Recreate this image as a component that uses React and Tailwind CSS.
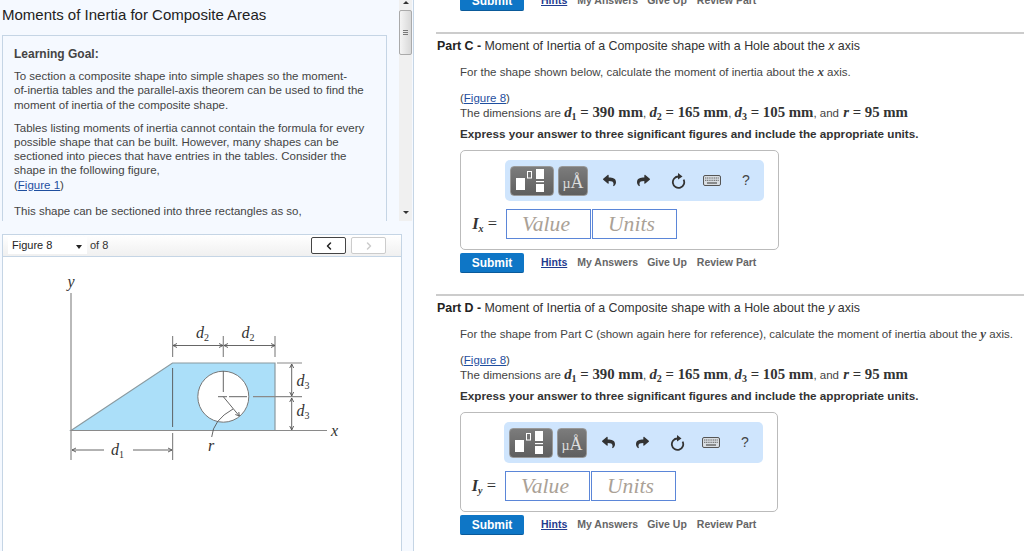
import React from 'react';
import { ChevronLeft, ChevronRight } from 'lucide-react';
import { FaReply, FaShare } from 'react-icons/fa';

const Var = ({ name, sub }) => (
  <span className="whitespace-nowrap">
    <i>{name}</i>
    {sub && <span className="text-[10px] relative top-[3px]">{sub}</span>}
  </span>
);

const Dimensions = () => (
  <p className="h-[14px] leading-[14px] whitespace-nowrap">
    The dimensions are{' '}
    <span className="font-['Liberation_Serif',serif] font-bold text-[14.8px] text-[#333]">
      <Var name="d" sub="1" /> = 390 mm
    </span>
    ,{' '}
    <span className="font-['Liberation_Serif',serif] font-bold text-[14.8px] text-[#333]">
      <Var name="d" sub="2" /> = 165 mm
    </span>
    ,{' '}
    <span className="font-['Liberation_Serif',serif] font-bold text-[14.8px] text-[#333]">
      <Var name="d" sub="3" /> = 105 mm
    </span>
    , and{' '}
    <span className="ml-[1px] font-['Liberation_Serif',serif] font-bold text-[14.8px] text-[#333]">
      <i>r</i> = 95 mm
    </span>
  </p>
);

const KeyboardIcon = () => (
  <svg width="18" height="11" viewBox="0 0 18 11">
    <rect x="0.5" y="0.5" width="17" height="10" rx="1.5" fill="#d8dde2" stroke="#555" />
    <path d="M2 3h14M2 5.3h14" stroke="#666" strokeDasharray="1.2 .6" />
    <path d="M4 8h10" stroke="#666" strokeWidth="1.4" />
  </svg>
);

const ResetIcon = () => (
  <svg width="15" height="16" viewBox="0 0 15 16">
    <path d="M7.5 3.5A5.7 5.7 0 1 0 12.6 6.6" fill="none" stroke="#333" strokeWidth="1.8" />
    <path d="M7 0 11.5 3.5 7 6.5Z" fill="#333" />
  </svg>
);

const TemplateIcon = () => (
  <svg width="42" height="28" viewBox="0 0 42 28">
    <rect x="5" y="11" width="9" height="12" fill="#fff" />
    <rect x="16.5" y="4.5" width="4" height="6.5" fill="none" stroke="#fff" />
    <rect x="25" y="2" width="8" height="10" fill="#fff" />
    <rect x="25" y="14" width="8" height="1.2" fill="#fff" />
    <rect x="25" y="17" width="8" height="8" fill="#fff" />
  </svg>
);

const AnswerBox = ({ sub, shift }) => (
  <div className={`h-[100px] border border-[#bbb] rounded-[5px] bg-white pt-[9px] ${shift ? 'w-[318px]' : 'w-[319px]'}`}>
    <div className={`h-[41px] w-[259px] bg-[#cfe5fd] rounded-[5px] flex items-center pl-[5px] ${shift ? 'ml-[43px]' : 'ml-[44px]'}`}>
      <div className="w-[44px] h-[30px] rounded-[4px] bg-gradient-to-b from-[#7c7c7c] to-[#5f5f5f] border border-[#999]">
        <TemplateIcon />
      </div>
      <div className="ml-[4px] w-[30px] h-[30px] rounded-[4px] bg-gradient-to-b from-[#7c7c7c] to-[#5f5f5f] border border-[#999] text-[#ddd] font-['Liberation_Serif',serif] text-[14px] leading-[31px] text-center">
        µ<span className="text-[18px]">Å</span>
      </div>
      <FaReply className="ml-[15px] text-[#333]" size={13} />
      <FaShare className="ml-[21px] text-[#333]" size={13} />
      <span className="ml-[21px] flex"><ResetIcon /></span>
      <span className="ml-[17px] flex"><KeyboardIcon /></span>
      <span className="ml-[21px] text-[14px] text-[#444] font-['Liberation_Sans',sans-serif]">?</span>
    </div>
    <div className="flex items-center mt-[8px]">
      <div className={`text-right pr-[9px] font-['Liberation_Serif',serif] text-[16.5px] text-[#333] whitespace-nowrap ${shift ? 'w-[44px]' : 'w-[45px]'}`}>
        <b><i>I</i><i className="text-[10px] relative top-[3px]">{sub}</i></b> =
      </div>
      {[
        ['Value', 'w-[85px]'],
        ['Units', 'w-[85px] ml-[1px]'],
      ].map(([text, width]) => (
        <div
          key={text}
          className={`${width} h-[30px] border border-[#5b86d8] bg-white pl-[15px] font-['Liberation_Serif',serif] italic text-[21.6px] leading-[29px] text-[#aaa196]`}
        >
          {text}
        </div>
      ))}
    </div>
  </div>
);

const ActionRow = () => (
  <div className="flex items-center h-[20px] text-[10.5px] font-bold text-[#666] whitespace-nowrap">
    <button className="w-[64px] h-[20px] rounded-[2px] bg-[#0e76c6] border-b border-[#0a5a9a] text-white text-[12px]">Submit</button>
    <a className="ml-[17px] text-[#1f3c8f] underline">Hints</a>
    <span className="ml-[10px]">My Answers</span>
    <span className="ml-[9px]">Give Up</span>
    <span className="ml-[10px]">Review Part</span>
  </div>
);

const Part = ({ letter, axis, children, sub, shift }) => (
  <section>
    <div className="h-[2px] bg-[#ccc]" />
    <h2 className="mt-[5px] ml-[1px] h-[14px] leading-[14px] text-[12.4px] text-[#333] whitespace-nowrap">
      <b className="text-[#222]">Part {letter} -</b> Moment of Inertia of a Composite shape with a Hole about the <i>{axis}</i> axis
    </h2>
    <div className="ml-[24px] text-[11.5px] text-[#444]">
      <p className="mt-[12px] h-[14px] leading-[14px] whitespace-nowrap">{children}</p>
      <p className="mt-[12px] h-[14px] leading-[14px]">
        (<a className="text-[#1f4f9f] underline">Figure 8</a>)
      </p>
      <Dimensions />
      <p className="mt-[8px] h-[14px] leading-[14px] text-[11.7px] font-bold text-[#333] whitespace-nowrap">
        Express your answer to three significant figures and include the appropriate units.
      </p>
      <div className="mt-[9px]">
        <AnswerBox sub={sub} shift={shift} />
      </div>
      <div className="mt-[3px]">
        <ActionRow />
      </div>
    </div>
  </section>
);

const Figure = () => (
  <svg viewBox="3 257 398 294" className="w-[398px] h-[294px] block">
    <path d="M71 430.5 172.5 363H275V430.5Z" fill="#abdff9" stroke="#8a9aa0" strokeWidth="1.2" />
    <circle cx="223.3" cy="396.7" r="25.5" fill="#fff" stroke="#777" />
    <g stroke="#8a8a8a" fill="none" strokeWidth="1.2">
      <path d="M71 293V460" />
      <path d="M71 430.5H327" />
      <path d="M172.6 336V357M172.6 433V460" />
      <path d="M223.3 336V357" />
      <path d="M275 336V357" />
      <path d="M277 363H302M253 396.7H302" />
    </g>
    <g stroke="#555" fill="none" strokeWidth="0.9">
      <path d="M172.6 368V427" />
      <path d="M223.3 371V392" />
      <path d="M218 396.7H227M229 396.7H247" />
      <path d="M173 345.5H223M224 345.5H275" />
      <path d="M291.7 364V396M291.7 398V430" />
      <path d="M72 450H104M133 450H172" />
      <path d="M223.3 396.7 239.3 416" />
      <path d="M211.7 437Q213 420 233 409" />
      <path d="M173 345.5l4-2M173 345.5l4 2M223 345.5l-4-2M223 345.5l-4 2M224 345.5l4-2M224 345.5l4 2M275 345.5l-4-2M275 345.5l-4 2" />
      <path d="M72 450l4-2M72 450l4 2M172 450l-4-2M172 450l-4 2" />
      <path d="M291.7 364l-2 4M291.7 364l2 4M291.7 396l-2-4M291.7 396l2-4M291.7 398l-2 4M291.7 398l2 4M291.7 430l-2-4M291.7 430l2-4" />
      <path d="M239.3 416l-4-1.5M239.3 416l-.5-4" />
    </g>
    <g fill="#333" fontFamily="'Liberation Serif', serif" fontStyle="italic" fontSize="16">
      <text x="67.5" y="287">y</text>
      <text x="331" y="436">x</text>
      <text x="208" y="451">r</text>
      <text x="111" y="455">d<tspan fontSize="10" dy="3" fontStyle="normal">1</tspan></text>
      <text x="196" y="338">d<tspan fontSize="10" dy="3" fontStyle="normal">2</tspan></text>
      <text x="241.5" y="338">d<tspan fontSize="10" dy="3" fontStyle="normal">2</tspan></text>
      <text x="296.5" y="386">d<tspan fontSize="10" dy="3" fontStyle="normal">3</tspan></text>
      <text x="296.5" y="416">d<tspan fontSize="10" dy="3" fontStyle="normal">3</tspan></text>
    </g>
  </svg>
);

const LeftPanel = () => (
  <aside className="w-[414px] h-full shrink-0 bg-[#f5f9ff] border-r border-[#c5d5e5] flex flex-col">
    <div className="flex h-[221px] overflow-hidden">
      <div className="w-[399px] pl-[2px] overflow-hidden">
        <h1 className="mt-[6px] h-[18px] leading-[18px] text-[15px] text-[#222] whitespace-nowrap">Moments of Inertia for Composite Areas</h1>
        <div className="mt-[11px] w-[385px] h-[200px] border border-[#c5d5e5] px-[11px] text-[11.5px] leading-[14.2px] text-[#444]">
          <p className="mt-[11px] font-bold text-[12px]">Learning Goal:</p>
          <p className="mt-[8px]">
            To section a composite shape into simple shapes so the moment-
            <br />
            of-inertia tables and the parallel-axis theorem can be used to find the moment of inertia of the composite shape.
          </p>
          <p className="mt-[9px]">
            Tables listing moments of inertia cannot contain the formula for every possible shape that can be built. However, many shapes can be sectioned into pieces that have entries in the tables. Consider the shape in the following figure,
            <br />
            (<a className="text-[#1f4f9f] underline">Figure 1</a>)
          </p>
          <p className="mt-[12px]">This shape can be sectioned into three rectangles as so,</p>
        </div>
      </div>
      <div className="w-[13px] h-[221px] bg-[#f0f0f0] flex flex-col items-center">
        <span className="mt-[1px] h-0 w-0 border-x-[3px] border-x-transparent border-b-[3px] border-b-[#333]" />
        <div className="mt-[6px] w-[13px] h-[45px] rounded-[2px] border border-[#aaa] bg-gradient-to-r from-[#f4f4f4] to-[#d8d8d8] flex flex-col items-center justify-center gap-[1px]">
          <span className="w-[5px] h-px bg-[#777]" />
          <span className="w-[5px] h-px bg-[#777]" />
          <span className="w-[5px] h-px bg-[#777]" />
        </div>
        <span className="mt-auto mb-[7px] h-0 w-0 border-x-[3px] border-x-transparent border-t-[3px] border-t-[#333]" />
      </div>
    </div>
    <div className="mt-[13px] ml-[2px] w-[400px] flex-1 border border-b-0 border-[#c5d5e5] bg-white overflow-hidden">
      <div className="h-[22px] flex items-center bg-gradient-to-b from-white to-[#f0f0f0] border-b border-[#c5d5e5] pr-[15px] text-[11px] text-[#333] whitespace-nowrap">
        <div className="ml-[5px] w-[79px] h-[17px] bg-white flex items-center pl-[4px] justify-between pr-[5px] text-[#222]">
          Figure 8
          <span className="mt-[3px] h-0 w-0 border-x-[3px] border-x-transparent border-t-[4px] border-t-[#222]" />
        </div>
        <span className="ml-[3px]">of 8</span>
        <button className="ml-auto w-[35px] h-[17px] flex items-center justify-center rounded-[2px] border border-[#444] bg-white">
          <ChevronLeft size={12} strokeWidth={3} className="text-[#222]" />
        </button>
        <button className="ml-[5px] w-[35px] h-[17px] flex items-center justify-center rounded-[2px] border border-[#ccc] bg-white">
          <ChevronRight size={12} strokeWidth={3} className="text-[#ccc]" />
        </button>
      </div>
      <Figure />
    </div>
  </aside>
);

const App = () => (
  <div className="w-[1024px] h-[551px] overflow-hidden flex bg-white font-['Liberation_Sans',Arial,sans-serif]">
    <LeftPanel />
    <main className="flex-1 pl-[22px] overflow-hidden">
      <div className="-mt-[9px] ml-[24px]">
        <ActionRow />
      </div>
      <div className="mt-[21px] flex flex-col gap-[21px]">
        <Part letter="C" axis="x" sub="x">
          For the shape shown below, calculate the moment of inertia about the{' '}
          <b className="font-['Liberation_Serif',serif] text-[13px]"><i>x</i></b> axis.
        </Part>
        <Part letter="D" axis="y" sub="y" shift>
          For the shape from Part C (shown again here for reference), calculate the moment of inertia about the{' '}
          <b className="font-['Liberation_Serif',serif] text-[13px]"><i>y</i></b> axis.
        </Part>
      </div>
    </main>
  </div>
);

export default App;
